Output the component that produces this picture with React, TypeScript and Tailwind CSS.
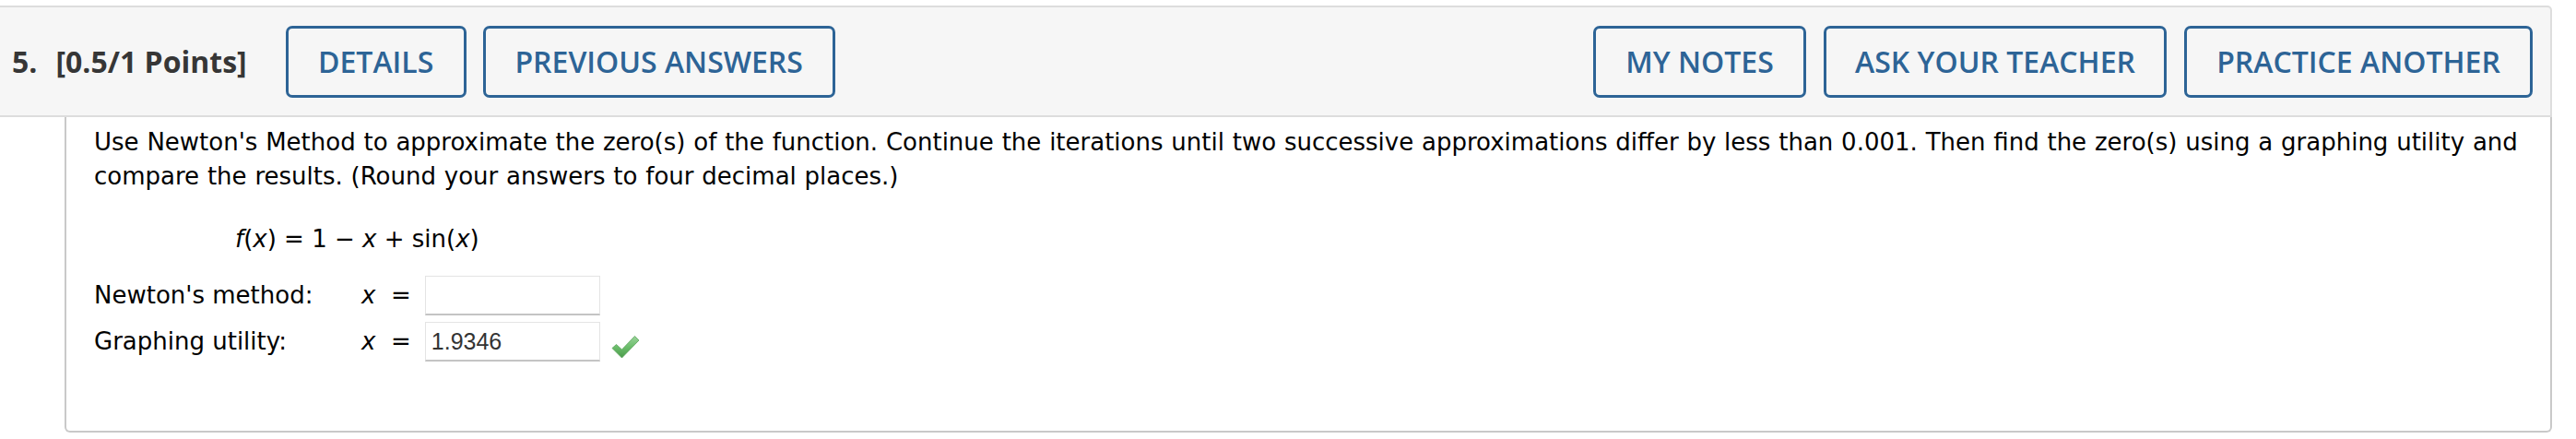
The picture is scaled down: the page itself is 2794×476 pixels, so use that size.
import React from 'react';

const buttons = {
  left: [
    { label: 'DETAILS', w: 'w-[196px]' },
    { label: 'PREVIOUS ANSWERS', w: 'w-[382px]' },
  ],
  right: [
    { label: 'MY NOTES', w: 'w-[231px]' },
    { label: 'ASK YOUR TEACHER', w: 'w-[372px]' },
    { label: 'PRACTICE ANOTHER', w: 'w-[378px]' },
  ],
};

function HeaderButton({ label, w }: { label: string; w: string }) {
  return (
    <button
      className={`${w} h-[78px] shrink-0 flex items-center justify-center border-[3px] border-[#2d6496] rounded-[7px] text-[#2d6496] text-[32px] font-semibold font-['Open_Sans',sans-serif] whitespace-nowrap`}
    >
      {label}
    </button>
  );
}

function CheckMark() {
  return (
    <svg width="31" height="26" viewBox="0 0 31 26" className="ml-[12px] mt-[10px]">
      <defs>
        <linearGradient id="chk" x1="0" y1="0" x2="0" y2="1">
          <stop offset="0" stopColor="#9ad39a" />
          <stop offset="0.5" stopColor="#6bbd6b" />
          <stop offset="1" stopColor="#4a9a4a" />
        </linearGradient>
      </defs>
      <path
        d="M1 14.5 L5.5 10.5 L11.5 16 L25.5 1.5 L30 6 L11.5 25 Z"
        fill="url(#chk)"
        stroke="#5aa55a"
        strokeWidth="0.8"
        strokeLinejoin="round"
      />
    </svg>
  );
}

function AnswerRow({ label, value, correct }: { label: string; value?: string; correct?: boolean }) {
  return (
    <div className="flex items-center h-[43px]">
      <span className="w-[290px] shrink-0">{label}</span>
      <span className="w-[32px] shrink-0 italic">x</span>
      <span>=</span>
      <div className="ml-[15px] w-[190px] h-[43px] bg-white border border-[#e4e4e4] border-b-2 border-b-[#c4c4c4] flex items-center pl-[6px] text-[25px] text-[#333] font-['Liberation_Sans',Arial,sans-serif]">
        {value}
      </div>
      {correct && <CheckMark />}
    </div>
  );
}

export default function App() {
  return (
    <div className="w-[2794px] h-[476px] bg-white overflow-hidden pt-[6px]">
      {/* question header */}
      <div className="mr-[26px] h-[121px] flex items-center bg-[#f6f6f6] border-t-2 border-b-2 border-r-2 border-[#dddddd] rounded-tr-[5px] pl-[13px] pr-[19px]">
        <div className="flex items-center text-[32px] font-bold text-[#363636] font-['Open_Sans',sans-serif] whitespace-nowrap">
          <span>5.</span>
          <span className="ml-[20px]">[0.5/1 Points]</span>
        </div>
        <div className="ml-[42px] flex gap-[18px]">
          {buttons.left.map((b) => (
            <HeaderButton key={b.label} {...b} />
          ))}
        </div>
        <div className="ml-auto flex gap-[19px]">
          {buttons.right.map((b) => (
            <HeaderButton key={b.label} {...b} />
          ))}
        </div>
      </div>

      {/* question body */}
      <div className="ml-[70px] mr-[26px] h-[342px] border-x-2 border-b-2 border-[#c9c9c9] rounded-b-[6px] pl-[30px] pr-[20px] pt-[9px] font-['DejaVu_Sans',Verdana,sans-serif] text-[26px] leading-[37px] text-black">
        <p className="whitespace-nowrap [word-spacing:0.55px]">
          Use Newton's Method to approximate the zero(s) of the function. Continue the iterations until two successive approximations differ by less than 0.001. Then find the zero(s) using a graphing utility and
          <br />
          compare the results. (Round your answers to four decimal places.)
        </p>
        <p className="mt-[31px] pl-[153px]">
          <i>f</i>(<i>x</i>) = 1 − <i>x</i> + sin(<i>x</i>)
        </p>
        <div className="mt-[21px] flex flex-col gap-[7px]">
          <AnswerRow label="Newton's method:" />
          <AnswerRow label="Graphing utility:" value="1.9346" correct />
        </div>
      </div>
    </div>
  );
}
